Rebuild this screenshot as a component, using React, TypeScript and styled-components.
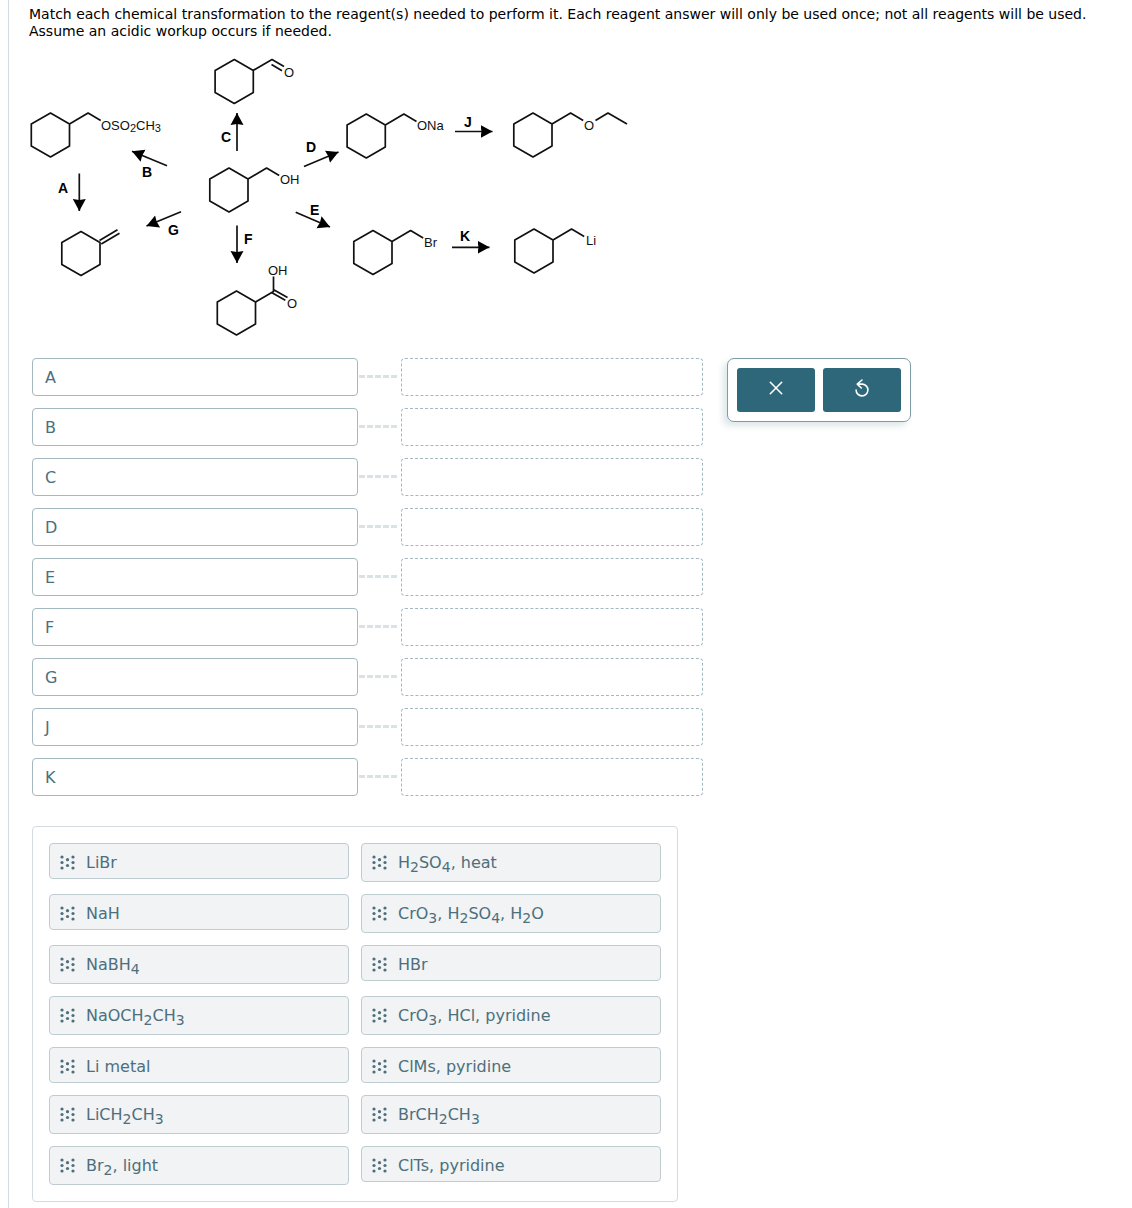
import React from 'react';
import styled, { createGlobalStyle } from 'styled-components';

const GlobalStyle = createGlobalStyle`
  *, *::before, *::after { box-sizing: border-box; }
  body {
    margin: 0;
    background: #fff;
    font-family: "DejaVu Sans", Verdana, sans-serif;
  }
`;

const Page = styled.main`
  min-height: 100vh;
  margin-left: 8px;
  padding: 6px 20px;
  border-left: 1px solid #d2dcdf;
`;

const Prompt = styled.p`
  margin: 0 0 10px;
  color: #000;
  font-size: 14px;
  line-height: 17px;
`;

const Scheme = styled.svg`
  display: block;
  width: 600px;
  max-width: 100%;
  height: auto;
  margin-bottom: 18px;
  font-family: "Liberation Sans", Arial, sans-serif;
`;

const Workspace = styled.div`
  display: flex;
  align-items: flex-start;
  gap: 24px;
  padding-left: 3px;
  color: #4d6f7c;
  font-size: 16px;
`;

const Matches = styled.ul`
  display: flex;
  flex: 0 1 671px;
  flex-direction: column;
  gap: 12px;
  margin: 0;
  padding: 0;
  list-style: none;
`;

const MatchRow = styled.li`
  display: grid;
  grid-template-columns: 326fr 43px 302fr;
  height: 38px;
`;

const Label = styled.span`
  display: flex;
  align-items: center;
  padding: 1px 12px 0;
  border: 1px solid #a3b8bf;
  border-radius: 4px;
`;

const Connector = styled.span`
  height: 3px;
  margin: 17px 4px 0 1px;
  background: repeating-linear-gradient(to right, #dbe2e5 0 6px, transparent 6px 8px);
`;

const DropZone = styled.span`
  border: 1px dashed #a3b8bf;
  border-radius: 4px;
`;

const Toolbar = styled.div`
  display: flex;
  gap: 8px;
  padding: 9px;
  border: 1px solid #7f9ba5;
  border-radius: 7px;
  background: #fff;
  box-shadow: -4px 4px 6px rgba(45, 103, 121, 0.16);
`;

const ToolButton = styled.button`
  display: flex;
  align-items: center;
  justify-content: center;
  width: 78px;
  height: 44px;
  padding: 0 0 4px;
  border: 0;
  border-radius: 3px;
  background: #2d6779;
  color: #fff;
  cursor: pointer;
`;

const Bank = styled.section`
  display: grid;
  grid-template-columns: 1fr 1fr;
  align-items: start;
  gap: 12px;
  max-width: 646px;
  margin: 30px 0 0 3px;
  padding: 16px;
  border: 1px solid #d2dcdf;
  border-radius: 4px;
`;

const Tile = styled.button<{ $tall: boolean }>`
  display: flex;
  align-items: center;
  gap: 11px;
  height: ${(p) => (p.$tall ? 39 : 36)}px;
  padding: ${(p) => (p.$tall ? 0 : 3)}px 10px 0;
  border: 1px solid #bfcdd2;
  border-radius: 4px;
  background: #f1f3f5;
  color: #4d6f7c;
  font-family: inherit;
  font-size: 16px;
  line-height: 20px;
  text-align: left;
  white-space: nowrap;
  cursor: grab;

  sub {
    font-size: 14px;
    line-height: 0;
  }
`;

const Grip = () => (
  <svg width="15" height="15" viewBox="0 0 15 15" fill="currentColor" aria-hidden="true">
    {[
      [2, 2], [2, 7.5], [2, 13],
      [7.5, 4.7], [7.5, 10.5],
      [13, 2], [13, 7.5], [13, 13],
    ].map(([x, y]) => (
      <circle key={`${x}-${y}`} cx={x} cy={y} r="1.6" />
    ))}
  </svg>
);

const Formula = ({ text }: { text: string }) => (
  <span>
    {text.split(/(\d)/).map((part, i) => (/^\d$/.test(part) ? <sub key={i}>{part}</sub> : part))}
  </span>
);

/* Top vertex of every cyclohexane ring, and whether it carries a CH2 arm. */
const rings: { x: number; y: number; arm: boolean }[] = [
  { x: 50.5, y: 113, arm: true },
  { x: 234.3, y: 59.5, arm: false },
  { x: 229, y: 168, arm: true },
  { x: 366.3, y: 114, arm: true },
  { x: 533, y: 113, arm: true },
  { x: 81, y: 231.5, arm: false },
  { x: 373, y: 230.5, arm: true },
  { x: 534, y: 229, arm: true },
  { x: 236.5, y: 291, arm: false },
];

const bonds = [
  'M253.3 70.3L272 59.5L284 66.5M271.5 64.5L282 70.8',
  'M595.5 120.5L608 113L627 124',
  'M99.5 240.6L117.5 229.8M101.3 244L119.5 233.2',
  'M255.5 302L273.5 291.5V276.5M273.3 289.5L287.5 297.5M272 292.8L285.3 300.3',
];

const arrows: [number, number, number, number][] = [
  [79.3, 173.5, 79.3, 211],
  [167, 165.7, 132, 151.2],
  [237, 151, 237, 113],
  [304, 166.5, 338.5, 152],
  [295.7, 212.3, 330, 227],
  [237, 225.5, 237, 263],
  [181, 211.7, 146.5, 226],
  [455, 131.5, 492.5, 131.5],
  [452, 247.3, 489.5, 247.3],
];

const steps: [string, number, number][] = [
  ['A', 58, 193], ['B', 142, 177], ['C', 221, 142], ['D', 306, 152], ['E', 310, 215],
  ['F', 244, 244], ['G', 168, 235], ['J', 464, 127], ['K', 460, 241],
];

const groups: [string, number, number][] = [
  ['O', 284, 77], ['OH', 280, 184], ['ONa', 417, 130], ['O', 584, 130],
  ['Br', 424, 247], ['Li', 586, 245], ['OH', 268, 275], ['O', 287, 308],
];

const ReactionScheme = () => (
  <Scheme viewBox="29 50 600 290" role="img" aria-label="Reaction scheme of cyclohexylmethanol">
    <defs>
      <marker id="head" markerUnits="userSpaceOnUse" markerWidth="13" markerHeight="14" refX="12" refY="7" orient="auto">
        <path d="M0 0.5L12 7L0 13.5L1 7Z" />
      </marker>
    </defs>
    <g fill="none" stroke="#111" strokeWidth="1.7" strokeLinejoin="round">
      {rings.map(({ x, y, arm }) => (
        <path
          key={`${x}-${y}`}
          d={`M${x} ${y}l19 11v22l-19 11l-19.2 -11v-22Z${arm ? 'm19 11l18.6 -11l12.6 7.4' : ''}`}
        />
      ))}
      {bonds.map((d) => <path key={d} d={d} />)}
      {arrows.map(([x1, y1, x2, y2], i) => (
        <line key={i} x1={x1} y1={y1} x2={x2} y2={y2} markerEnd="url(#head)" />
      ))}
    </g>
    <g fontSize="13" fill="#111">
      {groups.map(([t, x, y]) => <text key={`${x}`} x={x} y={y}>{t}</text>)}
      <text x="101" y="130">
        OSO<tspan fontSize="11" dy="2">2</tspan><tspan dy="-2">CH</tspan><tspan fontSize="11" dy="2">3</tspan>
      </text>
    </g>
    <g fontSize="14" fontWeight="700">
      {steps.map(([t, x, y]) => <text key={t} x={x} y={y}>{t}</text>)}
    </g>
  </Scheme>
);

const labels = ['A', 'B', 'C', 'D', 'E', 'F', 'G', 'J', 'K'];

const reagents = [
  'LiBr', 'H2SO4, heat',
  'NaH', 'CrO3, H2SO4, H2O',
  'NaBH4', 'HBr',
  'NaOCH2CH3', 'CrO3, HCl, pyridine',
  'Li metal', 'ClMs, pyridine',
  'LiCH2CH3', 'BrCH2CH3',
  'Br2, light', 'ClTs, pyridine',
];

export default function App() {
  return (
    <>
      <GlobalStyle />
      <Page>
        <Prompt>
          Match each chemical transformation to the reagent(s) needed to perform it. Each reagent
          answer will only be used once; not all reagents will be used. Assume an acidic workup
          occurs if needed.
        </Prompt>
        <ReactionScheme />
        <Workspace>
          <Matches>
            {labels.map((label) => (
              <MatchRow key={label}>
                <Label>{label}</Label>
                <Connector />
                <DropZone />
              </MatchRow>
            ))}
          </Matches>
          <Toolbar>
            <ToolButton type="button" aria-label="Clear">
              <svg width="14" height="14" viewBox="0 0 14 14" fill="none" stroke="currentColor" strokeWidth="1.6" strokeLinecap="round">
                <path d="M1.3 1.3L12.7 12.7M12.7 1.3L1.3 12.7" />
              </svg>
            </ToolButton>
            <ToolButton type="button" aria-label="Reset">
              <svg width="14" height="18" viewBox="0 0 14 18" fill="none" stroke="currentColor" strokeWidth="1.6" strokeLinecap="round" strokeLinejoin="round">
                <path d="M2.2 5.1H7.5A5.9 5.9 0 1 1 1.1 11M7 1L2.2 5.1L6.3 9" />
              </svg>
            </ToolButton>
          </Toolbar>
        </Workspace>
        <Bank aria-label="Reagents">
          {reagents.map((reagent) => (
            <Tile key={reagent} type="button" $tall={/\d/.test(reagent)}>
              <Grip />
              <Formula text={reagent} />
            </Tile>
          ))}
        </Bank>
      </Page>
    </>
  );
}
